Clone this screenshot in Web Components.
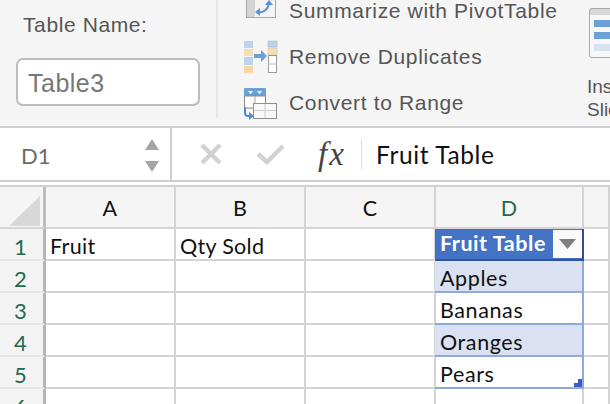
<!DOCTYPE html>
<html><head><meta charset="utf-8"><style>
html,body{margin:0;padding:0;width:610px;height:404px;overflow:hidden;background:#fff}
body{display:flex;flex-direction:column;font-family:"Liberation Sans",Arial,sans-serif}
</style></head><body>
<x-ribbon>
  <x-name-group slot="name" label="Table Name:" value="Table3"></x-name-group>
  <x-command slot="cmd" label="Summarize with PivotTable"><svg width="36" height="36" viewBox="0 0 36 36"><rect x="3.500" y="-5.500" width="29" height="30" fill="#f4f4f4" stroke="#a8a8a8"/><rect x="4" y="-5" width="8" height="29" fill="#d4d4d4"/><rect x="14" y="-5" width="18" height="9" fill="#d4d4d4"/><path d="M15 19c5 1 10-2 11-9" fill="none" stroke="#5b94d4" stroke-width="2"/><path d="M22 12l4-5 4 5zM17 15v8l-5-4z" fill="#5b94d4"/></svg></x-command>
  <x-command slot="cmd" label="Remove Duplicates"><svg width="36" height="36" viewBox="0 0 36 36"><rect x="1" y="2" width="9" height="7" fill="#bcd4ee"/><rect x="1" y="10" width="9" height="7" fill="#f6dfae"/><rect x="1" y="18" width="9" height="8" fill="#bcd4ee"/><rect x="1" y="27" width="9" height="7" fill="#f6d6a2"/><rect x="25" y="2" width="9" height="6" fill="#bcd4ee" stroke="#9ab" stroke-width=".5"/><rect x="25" y="9" width="9" height="7" fill="#f6dfae" stroke="#bbb" stroke-width=".5"/><rect x="25.500" y="16.500" width="8" height="17" fill="#fff" stroke="#999"/><path d="M25 25h9" stroke="#bbb"/><path d="M11 15h7v-4l6 6-6 6v-4h-7z" fill="#6ea0d8"/></svg></x-command>
  <x-command slot="cmd" label="Convert to Range"><svg width="36" height="36" viewBox="0 0 36 36"><rect x="1" y="3" width="22" height="8" rx="1" fill="#6ea0d8"/><path d="M5 6h5l-2.500 3zM14 6h5l-2.500 3z" fill="#fff"/><rect x="1.500" y="11" width="21" height="12" fill="#fff" stroke="#8a8a8a"/><path d="M12 11v7" stroke="#aaa"/><rect x="10.500" y="18.500" width="23" height="15" fill="#f8f8f8" stroke="#8f8f8f"/><path d="M22 19v14M11 25.500h22" stroke="#ccc"/><path d="M2 22v6c0 2 1 3 3 3h2" fill="none" stroke="#4f8bd0" stroke-width="2"/><path d="M6 27l5 4-5 4z" fill="#4f8bd0"/></svg></x-command>
  <x-slicer slot="right"></x-slicer>
</x-ribbon>
<x-formula-bar cell="D1" value="Fruit Table"></x-formula-bar>
<x-sheet></x-sheet>
<script>
function def(name,css,html,init){customElements.define(name,class extends HTMLElement{connectedCallback(){if(this.shadowRoot)return;const r=this.attachShadow({mode:"open"});r.innerHTML="<style>"+css+"</style>"+(typeof html==="function"?html(this):html);if(init)init(r,this);}});}
def("x-ribbon",`:host{display:flex;height:126px;flex:none;background:#f5f5f5;overflow:hidden;border-bottom:2px solid #cfcfcf;color:#555}
.n{display:block;width:216px;flex:none;height:118px;border-right:2px solid #e6e6e6}
.c{display:flex;flex-direction:column;flex:none;width:344px;padding-left:25px;box-sizing:content-box;margin-top:-7px;gap:10px}
.r{flex:none;width:22px;padding-left:0}`,
`<div class="n"><slot name="name"></slot></div><div class="c"><slot name="cmd"></slot></div><div class="r"><slot name="right"></slot></div>`);
def("x-name-group",`:host{display:flex;flex-direction:column;padding:14px 0 0 16px;width:184px;color:#555}
.l{font-size:21px;line-height:22px;padding-left:7px;letter-spacing:.6px}
.i{box-sizing:border-box;margin-top:22px;height:48px;border:2px solid #bcbcbc;border-radius:7px;background:#fff;font-size:25px;line-height:46px;padding-left:10px;color:#777;letter-spacing:.5px}`,
t=>`<div class="l">${t.getAttribute("label")}</div><div class="i">${t.getAttribute("value")}</div>`);
def("x-command",`:host{display:flex;align-items:center;height:36px;gap:10px;color:#555;white-space:nowrap}
.t{font-size:21px;letter-spacing:.66px}
::slotted(svg){flex:none;overflow:visible}`,
t=>`<slot></slot><span class="t">${t.getAttribute("label")}</span>`);
def("x-slicer",`:host{display:flex;flex-direction:column;color:#555}
.b{box-sizing:border-box;margin:8px 0 0 2px;width:30px;height:50px;border:1px solid #a8a8a8;border-radius:3px;display:flex;flex-direction:column;gap:5px;padding-top:11px;background:linear-gradient(#d8d8d8 0 6px,#f7f7f7 6px)}
.b i{display:block;height:7px;margin-left:4px;background:#6ea0d8}.b i:last-child{background:#d5e2f2}
.t{font-size:19px;line-height:23px;margin-top:17px;white-space:nowrap;width:23px;overflow:hidden}`,
`<div class="b"><i></i><i></i><i></i></div><div class="t">Insert<br>Slicer</div>`);
def("x-formula-bar",`:host{display:flex;height:52px;flex:none;background:#fff;border-bottom:2px solid #cfcfcf;align-items:stretch;font-family:"Lato","Liberation Sans",sans-serif}
.box{width:172px;box-sizing:border-box;border-right:2px solid #cfcfcf;display:flex;align-items:center;justify-content:space-between;padding:2px 11px 0 21px;font-size:22px;color:#6b6b6b}
.sp{display:flex;flex-direction:column;gap:11px}
.btns{display:flex;align-items:center;padding-left:28px;gap:34px;width:189px;box-sizing:border-box;flex:none}
.fx{font:italic 33px "Liberation Serif",serif;color:#444;margin-left:-1px;letter-spacing:2px;line-height:1}
.sep{width:1px;height:30px;background:#ddd;flex:none;align-self:center}
.v{font-size:24.500px;color:#111;padding-left:14px;align-self:center;letter-spacing:.6px}`,
t=>`<div class="box"><span>${t.getAttribute("cell")}</span><span class="sp"><svg width="14" height="11" style="display:block"><path d="M7 0l7 11H0z" fill="#a5a5a5"/></svg><svg width="14" height="11" style="display:block"><path d="M0 0h14L7 11z" fill="#a5a5a5"/></svg></span></div>
<div class="btns"><svg width="22" height="22" viewBox="0 0 22 22"><path d="M2 2l18 18M20 2L2 20" stroke="#d2d2d2" stroke-width="4.500"/></svg><svg width="29" height="22" viewBox="0 0 29 22"><path d="M2 11l9 8L27 3" fill="none" stroke="#d2d2d2" stroke-width="4.500"/></svg><span class="fx">fx</span></div><div class="sep"></div><div class="v">${t.getAttribute("value")}</div>`);
def("x-sheet",`:host{display:grid;flex:none;margin-top:3px;border-top:2px solid #d0d0d0;grid-template-columns:46px 130px 130px 130px 148px 26px;grid-template-rows:42px 32px 32px 32px 32px 32px 32px;height:218px;overflow:hidden;font-family:"Lato","Liberation Sans",sans-serif;font-size:21.500px;letter-spacing:.3px;color:#111;line-height:1}
div{box-sizing:border-box;border-right:2px solid #d4d4d4;border-bottom:2px solid #d4d4d4;display:flex;align-items:center;padding:5px 0 0 4px;white-space:nowrap;overflow:hidden}
.h{background:#f5f5f5;justify-content:center;padding:4px 0 0;}
.rh{background:#f3f3f3;justify-content:center;color:#1f6b4b;padding:5px 2px 0 0;border-right:3px solid #b4b4b4;border-bottom-color:#e6e6e6;font-size:22px;letter-spacing:0}
.corner{background:#f5f5f5;border-right:3px solid #bdbdbd;padding:0;align-items:flex-end}
.sel{color:#1f6b4b}
.t{border-color:#8eaadb;border-width:0 2px 2px 2px;padding-left:5px;position:relative;margin-left:-1px;letter-spacing:.6px}
.odd{background:#d9e1f2}
.th{background:#4472c4;color:#fff;font-weight:700;border:none;border-left:2px solid #4472c4;border-right:2px solid #2f4f8f;border-bottom:2px solid #2f5597;justify-content:space-between;padding:0 0 0 3px;margin-left:-1px;letter-spacing:.55px}
.dd{display:flex;width:29px;height:28px;background:#fafafa;border:0;align-items:center;justify-content:center;padding:0}
.hnd{position:absolute;right:0;bottom:0;width:8px;height:8px;background:#3f5fc0;clip-path:polygon(100% 0,100% 100%,0 100%,0 50%,50% 50%,50% 0)}`,
()=>{const col=["A","B","C","D",""];let s=`<div class="corner"><svg width="40" height="38" viewBox="0 0 40 38" style="display:block"><path d="M40 7v30H9z" fill="#d8d8d8"/></svg></div>`;
col.forEach((c,i)=>s+=`<div class="h ${c==="D"?"sel":""}">${c}</div>`);
const d=[["Fruit","Qty Sold",""],["","",""],["","",""],["","",""],["","",""],["","",""]];
const t=["Fruit Table","Apples","Bananas","Oranges","Pears",""];
d.forEach((r,i)=>{s+=`<div class="rh">${i+1}</div>`;r.forEach(v=>s+=`<div>${v}</div>`);
let cl=i===0?"th":i<5?("t"+(i%2?" odd":"")):"";
let inner=t[i];if(i===0)inner=`<span>${t[i]}</span><div class="dd"><svg width="17" height="10"><path d="M0 0h17L8.500 10z" fill="#7f7f7f"/></svg></div>`;if(i===4)inner+=`<span class="hnd"></span>`;
s+=`<div class="${cl}">${inner}</div><div></div>`;});return s;});
</script>
</body></html>
